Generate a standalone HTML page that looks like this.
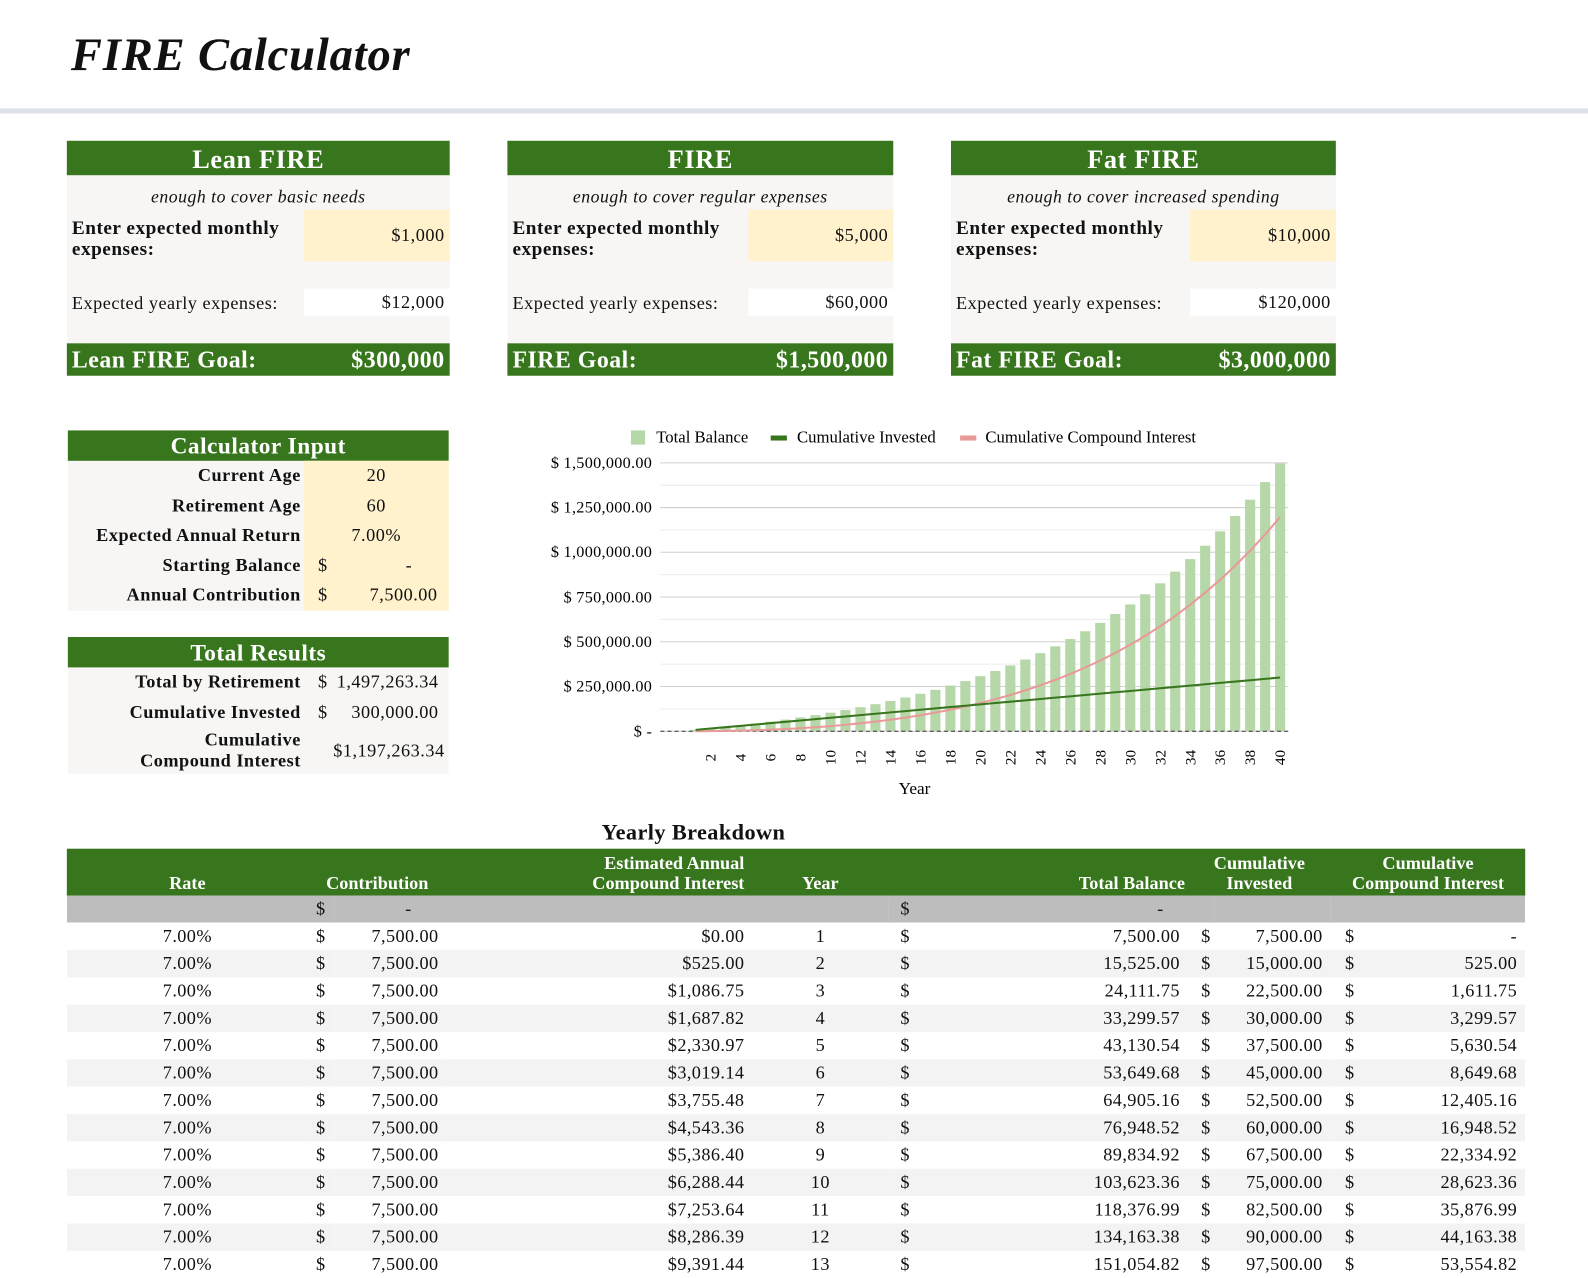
<!DOCTYPE html>
<html><head><meta charset="utf-8"><style>
body{margin:0;width:1588px;height:1262px;overflow:hidden;background:#fff;font-family:"Liberation Serif",serif;color:#111;position:relative}
#w{position:absolute;left:0;top:0;width:1568px;height:1246px;transform:scale(1.01276);transform-origin:0 0}
.a{position:absolute}
.g{background:#38761d;color:#fff;font-weight:bold}
.card{position:absolute;top:139px;height:232px;background:#f7f6f5;letter-spacing:0.5px}
.card .h{position:absolute;left:0;right:0;top:0;height:34px;text-align:center;font-size:26px;line-height:37px;letter-spacing:0.6px}
.card .sub{position:absolute;left:0;right:0;top:45px;text-align:center;font-style:italic;font-size:17.5px}
.card .l1{position:absolute;left:5px;top:76px;font-weight:bold;font-size:19px;line-height:21px}
.card .y{position:absolute;top:68px;height:51px;right:0;background:#fff2cc;text-align:right;padding-right:5px;line-height:51px;font-size:18px;box-sizing:border-box}
.card .l2{position:absolute;left:5px;top:150px;font-size:18px}
.card .w{position:absolute;top:146px;height:27px;right:0;background:#fff;text-align:right;padding-right:5px;line-height:27px;font-size:18px;box-sizing:border-box}
.card .goal{position:absolute;left:0;right:0;top:200px;height:32px;font-size:23.5px;line-height:34px}
.card .goal span{position:absolute}
.ci{position:absolute;left:67px;width:376px;background:#f7f6f5;letter-spacing:0.5px}
.ci .h{height:30px;text-align:center;font-size:23px;line-height:32px}
.row{position:relative;height:29.5px;font-size:18px;line-height:29px}
.row .lb{position:absolute;right:146px;font-weight:bold;text-align:right}
.row .v{position:absolute;left:233px;width:143px;height:100%;background:#fff2cc}
table{position:absolute;left:66px;top:838px;width:1440px;border-collapse:collapse;font-size:18px;table-layout:fixed;letter-spacing:0.4px}
td{height:27px;padding:0 8px;white-space:nowrap;overflow:hidden;line-height:27px}
tr:nth-child(even) td{background:#f3f3f3}
.r{text-align:right}.c{text-align:center}
tr.hd td{vertical-align:bottom;padding-bottom:2px;line-height:20px;background:transparent;color:#fff;font-weight:bold;letter-spacing:0}
tr.gr,tr.gr td{background:#bdbdbd}
</style></head><body><div id="w">
<div class="a" style="left:70px;top:27px;font-size:46px;font-weight:bold;font-style:italic;letter-spacing:0.8px">FIRE Calculator</div>
<div class="a" style="left:0;top:107px;width:1568px;height:5px;background:#dde1ea"></div>

<div class="card" style="left:66px;width:378px">
<div class="h g">Lean FIRE</div><div class="sub">enough to cover basic needs</div>
<div class="l1">Enter expected monthly<br>expenses:</div><div class="y" style="width:144px">$1,000</div>
<div class="l2">Expected yearly expenses:</div><div class="w" style="width:144px">$12,000</div>
<div class="goal g"><span style="left:5px">Lean FIRE Goal:</span><span style="right:5px">$300,000</span></div></div>

<div class="card" style="left:501px;width:381px">
<div class="h g">FIRE</div><div class="sub">enough to cover regular expenses</div>
<div class="l1">Enter expected monthly<br>expenses:</div><div class="y" style="width:143px">$5,000</div>
<div class="l2">Expected yearly expenses:</div><div class="w" style="width:143px">$60,000</div>
<div class="goal g"><span style="left:5px">FIRE Goal:</span><span style="right:5px">$1,500,000</span></div></div>

<div class="card" style="left:939px;width:380px">
<div class="h g">Fat FIRE</div><div class="sub">enough to cover increased spending</div>
<div class="l1">Enter expected monthly<br>expenses:</div><div class="y" style="width:144px">$10,000</div>
<div class="l2">Expected yearly expenses:</div><div class="w" style="width:144px">$120,000</div>
<div class="goal g"><span style="left:5px">Fat FIRE Goal:</span><span style="right:5px">$3,000,000</span></div></div>

<div class="ci" style="top:425px">
<div class="h g">Calculator Input</div>
<div class="row"><span class="lb">Current Age</span><span class="v" style="text-align:center">20</span></div>
<div class="row"><span class="lb">Retirement Age</span><span class="v" style="text-align:center">60</span></div>
<div class="row"><span class="lb">Expected Annual Return</span><span class="v" style="text-align:center">7.00%</span></div>
<div class="row"><span class="lb">Starting Balance</span><span class="v"><span style="position:absolute;left:14px">$</span><span style="position:absolute;right:36px">-</span></span></div>
<div class="row"><span class="lb">Annual Contribution</span><span class="v"><span style="position:absolute;left:14px">$</span><span style="position:absolute;right:11px">7,500.00</span></span></div>
</div>

<div class="ci" style="top:629px">
<div class="h g">Total Results</div>
<div class="row"><span class="lb">Total by Retirement</span><span style="position:absolute;left:247px">$</span><span style="position:absolute;right:10px">1,497,263.34</span></div>
<div class="row"><span class="lb">Cumulative Invested</span><span style="position:absolute;left:247px">$</span><span style="position:absolute;right:10px">300,000.00</span></div>
<div class="row" style="height:46px"><span class="lb" style="line-height:21px;top:2px">Cumulative<br>Compound Interest</span><span style="position:absolute;right:4px;top:9px">$1,197,263.34</span></div>
</div>

<svg class="a" style="left:0;top:0" width="1568" height="800">
<rect x="623" y="425" width="14" height="14" fill="#b6d7a8"/><text x="648" y="437" font-size="16.5" font-family="Liberation Serif">Total Balance</text>
<rect x="761" y="430" width="16" height="5" fill="#38761d"/><text x="787" y="437" font-size="16.5" font-family="Liberation Serif">Cumulative Invested</text>
<rect x="948" y="430" width="16" height="5" fill="#ea9999"/><text x="973" y="437" font-size="16.5" font-family="Liberation Serif">Cumulative Compound Interest</text>
<g font-size="16" font-family="Liberation Serif" text-anchor="end" letter-spacing="0.3">
<text x="644" y="462">$ 1,500,000.00</text><text x="644" y="506">$ 1,250,000.00</text><text x="644" y="550">$ 1,000,000.00</text><text x="644" y="595">$ 750,000.00</text><text x="644" y="639">$ 500,000.00</text><text x="644" y="683">$ 250,000.00</text><text x="644" y="727">$ -</text>
</g>
<g id="grid"></g><g id="bars"></g>
<g font-size="15" font-family="Liberation Serif" id="xl"></g>
<text x="903" y="784" font-size="17" text-anchor="middle" font-family="Liberation Serif">Year</text>
</svg>

<div class="a" style="left:594px;top:809px;font-size:22px;font-weight:bold;letter-spacing:0.4px">Yearly Breakdown</div>
<div class="a" style="left:66px;top:838px;width:1440px;height:47px;background:#38761d"></div>

<table>
<colgroup><col style="width:238px"><col style="width:26px"><col style="width:111px"><col style="width:302px"><col style="width:134px"><col style="width:28px"><col style="width:268px"><col style="width:26px"><col style="width:115px"><col style="width:26px"><col style="width:166px"></colgroup>
<tr class="hd" style="height:46px"><td class="c">Rate</td><td class="c" colspan="2">Contribution</td><td class="r">Estimated Annual<br>Compound Interest</td><td class="c">Year</td><td></td><td class="r" style="padding-right:3px">Total Balance</td><td class="c" colspan="2">Cumulative<br>Invested</td><td class="c" colspan="2" style="padding:0 0 2px 0">Cumulative<br>Compound Interest</td></tr>
<tr class="gr"><td></td><td>$</td><td style="padding-left:70px">-</td><td></td><td></td><td style="padding-left:12px">$</td><td class="r" style="padding-right:24px">-</td><td></td><td></td><td></td><td></td></tr>
<tr><td class="c">7.00%</td><td>$</td><td class="r">7,500.00</td><td class="r">$0.00</td><td class="c">1</td><td style="padding-left:12px">$</td><td class="r">7,500.00</td><td style="padding-left:13px">$</td><td class="r">7,500.00</td><td style="padding-left:14px">$</td><td class="r">-</td></tr>
<tr><td class="c">7.00%</td><td>$</td><td class="r">7,500.00</td><td class="r">$525.00</td><td class="c">2</td><td style="padding-left:12px">$</td><td class="r">15,525.00</td><td style="padding-left:13px">$</td><td class="r">15,000.00</td><td style="padding-left:14px">$</td><td class="r">525.00</td></tr>
<tr><td class="c">7.00%</td><td>$</td><td class="r">7,500.00</td><td class="r">$1,086.75</td><td class="c">3</td><td style="padding-left:12px">$</td><td class="r">24,111.75</td><td style="padding-left:13px">$</td><td class="r">22,500.00</td><td style="padding-left:14px">$</td><td class="r">1,611.75</td></tr>
<tr><td class="c">7.00%</td><td>$</td><td class="r">7,500.00</td><td class="r">$1,687.82</td><td class="c">4</td><td style="padding-left:12px">$</td><td class="r">33,299.57</td><td style="padding-left:13px">$</td><td class="r">30,000.00</td><td style="padding-left:14px">$</td><td class="r">3,299.57</td></tr>
<tr><td class="c">7.00%</td><td>$</td><td class="r">7,500.00</td><td class="r">$2,330.97</td><td class="c">5</td><td style="padding-left:12px">$</td><td class="r">43,130.54</td><td style="padding-left:13px">$</td><td class="r">37,500.00</td><td style="padding-left:14px">$</td><td class="r">5,630.54</td></tr>
<tr><td class="c">7.00%</td><td>$</td><td class="r">7,500.00</td><td class="r">$3,019.14</td><td class="c">6</td><td style="padding-left:12px">$</td><td class="r">53,649.68</td><td style="padding-left:13px">$</td><td class="r">45,000.00</td><td style="padding-left:14px">$</td><td class="r">8,649.68</td></tr>
<tr><td class="c">7.00%</td><td>$</td><td class="r">7,500.00</td><td class="r">$3,755.48</td><td class="c">7</td><td style="padding-left:12px">$</td><td class="r">64,905.16</td><td style="padding-left:13px">$</td><td class="r">52,500.00</td><td style="padding-left:14px">$</td><td class="r">12,405.16</td></tr>
<tr><td class="c">7.00%</td><td>$</td><td class="r">7,500.00</td><td class="r">$4,543.36</td><td class="c">8</td><td style="padding-left:12px">$</td><td class="r">76,948.52</td><td style="padding-left:13px">$</td><td class="r">60,000.00</td><td style="padding-left:14px">$</td><td class="r">16,948.52</td></tr>
<tr><td class="c">7.00%</td><td>$</td><td class="r">7,500.00</td><td class="r">$5,386.40</td><td class="c">9</td><td style="padding-left:12px">$</td><td class="r">89,834.92</td><td style="padding-left:13px">$</td><td class="r">67,500.00</td><td style="padding-left:14px">$</td><td class="r">22,334.92</td></tr>
<tr><td class="c">7.00%</td><td>$</td><td class="r">7,500.00</td><td class="r">$6,288.44</td><td class="c">10</td><td style="padding-left:12px">$</td><td class="r">103,623.36</td><td style="padding-left:13px">$</td><td class="r">75,000.00</td><td style="padding-left:14px">$</td><td class="r">28,623.36</td></tr>
<tr><td class="c">7.00%</td><td>$</td><td class="r">7,500.00</td><td class="r">$7,253.64</td><td class="c">11</td><td style="padding-left:12px">$</td><td class="r">118,376.99</td><td style="padding-left:13px">$</td><td class="r">82,500.00</td><td style="padding-left:14px">$</td><td class="r">35,876.99</td></tr>
<tr><td class="c">7.00%</td><td>$</td><td class="r">7,500.00</td><td class="r">$8,286.39</td><td class="c">12</td><td style="padding-left:12px">$</td><td class="r">134,163.38</td><td style="padding-left:13px">$</td><td class="r">90,000.00</td><td style="padding-left:14px">$</td><td class="r">44,163.38</td></tr>
<tr><td class="c">7.00%</td><td>$</td><td class="r">7,500.00</td><td class="r">$9,391.44</td><td class="c">13</td><td style="padding-left:12px">$</td><td class="r">151,054.82</td><td style="padding-left:13px">$</td><td class="r">97,500.00</td><td style="padding-left:14px">$</td><td class="r">53,554.82</td></tr>
</table>
</div>
<script>
var ns="http://www.w3.org/2000/svg";
function el(p,t,a){var e=document.createElementNS(ns,t);for(var k in a)e.setAttribute(k,a[k]);p.appendChild(e);return e;}
var grid=document.getElementById('grid'),bars=document.getElementById('bars'),xl=document.getElementById('xl');
for(var i=0;i<=12;i++){var y=722-i*265/12;el(grid,'line',{x1:652,x2:1272,y1:y,y2:y,stroke:i%2?'#ececec':'#cfcfcf','stroke-width':1});}
var Y=function(v){return 722-v/1500000*265};
var X=function(n){return 672+n*14.8};
var b=0,pi='',pc='';
for(var n=1;n<=40;n++){b=b*1.07+7500;var inv=n*7500;
el(bars,'rect',{x:X(n)-5,y:Y(b),width:10,height:722-Y(b),fill:'#b6d7a8'});
pi+=(n==1?'M':'L')+X(n)+' '+Y(inv);pc+=(n==1?'M':'L')+X(n)+' '+Y(b-inv);
if(n%2==0){var t=el(xl,'text',{x:0,y:0,transform:'translate('+(X(n)+5)+',748) rotate(-90)','text-anchor':'middle'});t.textContent=n;}}
el(bars,'line',{x1:652,x2:1272,y1:722,y2:722,stroke:'#333','stroke-dasharray':'4 3'});
el(bars,'path',{d:pc,fill:'none',stroke:'#ea9999','stroke-width':2});
el(bars,'path',{d:pi,fill:'none',stroke:'#38761d','stroke-width':2});
</script>
</body></html>
